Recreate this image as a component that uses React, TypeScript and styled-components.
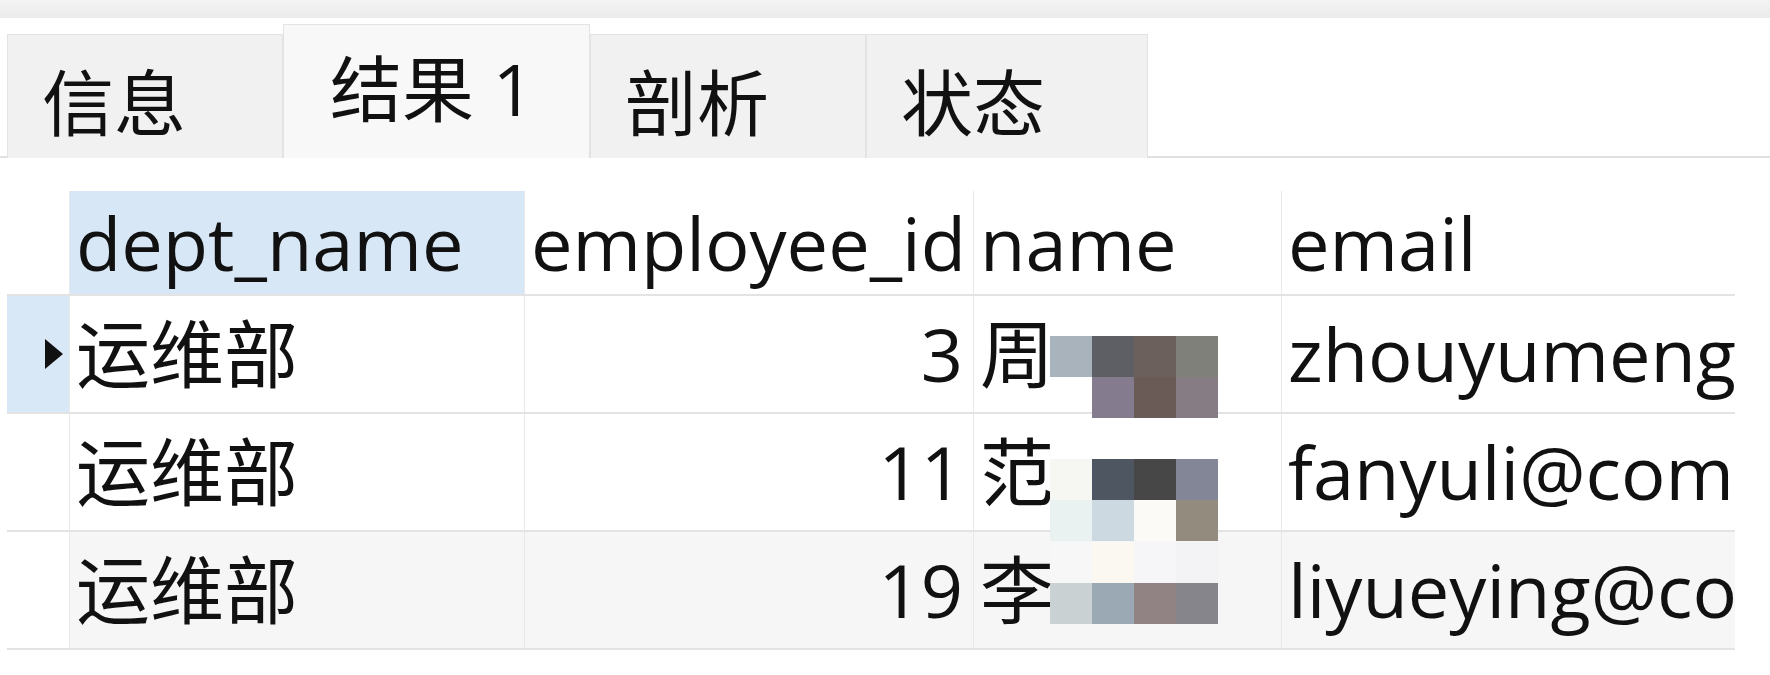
import styled, { createGlobalStyle } from 'styled-components';

const GlobalStyle = createGlobalStyle`
  html, body {
    margin: 0;
    padding: 0;
    background: #ffffff;
  }
  body {
    font-family: "Open Sans", "Noto Sans CJK SC", sans-serif;
    color: #111111;
  }
`;

const GRID = '62px 455px 449px 308px 454px';

const Page = styled.div`
  width: 1770px;
  height: 675px;
  overflow: hidden;
`;

const TopStrip = styled.div`
  height: 18px;
  background: linear-gradient(#f4f4f4, #ebebeb);
`;

const TabBar = styled.div`
  display: flex;
  align-items: flex-end;
  height: 133px;
  margin-top: 5px;
  padding-left: 7px;
  border-bottom: 2px solid #e0e0e0;
`;

const Tab = styled.div<{ $active?: boolean; $width: number }>`
  box-sizing: border-box;
  width: ${p => p.$width}px;
  height: ${p => (p.$active ? 134 : 124)}px;
  margin-bottom: -2px;
  padding-left: ${p => (p.$active ? 46 : 34)}px;
  padding-top: ${p => (p.$active ? 0 : 10)}px;
  padding-bottom: ${p => (p.$active ? 8 : 0)}px;
  display: flex;
  align-items: center;
  background: ${p => (p.$active ? '#f8f8f8' : '#f1f1f1')};
  border: 1px solid #e3e3e3;
  border-bottom: none;
  font-size: 72px;
  line-height: 1;
  white-space: nowrap;
`;

const Table = styled.div`
  width: 1728px;
  margin: 33px 0 0 7px;
`;

const Row = styled.div<{ $header?: boolean; $striped?: boolean }>`
  box-sizing: border-box;
  display: grid;
  grid-template-columns: ${GRID};
  height: ${p => (p.$header ? 105 : 118)}px;
  background: ${p => (p.$striped ? '#f6f6f6' : '#ffffff')};
  border-bottom: 2px solid #e3e3e3;
`;

const Indicator = styled.div<{ $current?: boolean }>`
  display: flex;
  align-items: center;
  justify-content: flex-end;
  padding-right: 6px;
  background: ${p => (p.$current ? '#d9e8f7' : '#ffffff')};
`;

const Cell = styled.div<{ $right?: boolean; $selected?: boolean; $clip?: boolean }>`
  position: relative;
  display: flex;
  align-items: center;
  justify-content: ${p => (p.$right ? 'flex-end' : 'flex-start')};
  padding: ${p => (p.$right ? '0 10px 0 0' : '0 0 0 6px')};
  overflow: ${p => (p.$clip ? 'hidden' : 'visible')};
  white-space: nowrap;
  font-size: 74px;
  line-height: 1;
  background: ${p => (p.$selected ? '#d8e7f6' : 'transparent')};
  border-left: 1px solid #e8e8e8;
`;

const Mosaic = styled.div<{ $top: number }>`
  position: absolute;
  left: 76px;
  top: ${p => p.$top}px;
  z-index: 1;
  display: grid;
  grid-template-columns: repeat(4, 42px);
  grid-auto-rows: 41px;
`;

const Tile = styled.span<{ $color: string }>`
  background: ${p => p.$color};
`;

const tabs = [
  { label: '信息', width: 276 },
  { label: '结果 1', width: 307, active: true },
  { label: '剖析', width: 276 },
  { label: '状态', width: 282 },
];

const rows = [
  {
    dept: '运维部',
    id: 3,
    surname: '周',
    email: 'zhouyumeng@company.com',
    mosaicTop: 40,
    tiles: ['#a9b3bb', '#5e5e65', '#6b605b', '#80807b', 'transparent', '#857b8f', '#6b5b56', '#867d84'],
  },
  {
    dept: '运维部',
    id: 11,
    surname: '范',
    email: 'fanyuli@company.com',
    mosaicTop: 45,
    tiles: ['#f6f7f3', '#4d5661', '#474747', '#828696', '#eaf1f1', '#cdd9e0', '#fbfaf6', '#948b7f'],
  },
  {
    dept: '运维部',
    id: 19,
    surname: '李',
    email: 'liyueying@company.com',
    mosaicTop: 10,
    tiles: ['#f7f7f7', '#fbf8f2', '#f6f6f8', '#f3f3f5', '#cad1d2', '#9ba9b4', '#918383', '#86858b'],
  },
];

function RowArrow() {
  return (
    <svg width="18" height="30" viewBox="0 0 18 30">
      <polygon points="0,0 18,15 0,30" fill="#111" />
    </svg>
  );
}

export default function App() {
  return (
    <Page>
      <GlobalStyle />
      <TopStrip />
      <TabBar>
        {tabs.map(t => (
          <Tab key={t.label} $width={t.width} $active={t.active}>
            {t.label}
          </Tab>
        ))}
      </TabBar>

      <Table>
        <Row $header>
          <Indicator />
          <Cell $selected $clip>dept_name</Cell>
          <Cell $clip>employee_id</Cell>
          <Cell $clip>name</Cell>
          <Cell $clip>email</Cell>
        </Row>
        {rows.map((r, i) => (
          <Row key={r.id} $striped={i === 2}>
            <Indicator $current={i === 0}>{i === 0 && <RowArrow />}</Indicator>
            <Cell $clip>{r.dept}</Cell>
            <Cell $right $clip>{r.id}</Cell>
            <Cell>
              {r.surname}
              <Mosaic $top={r.mosaicTop}>
                {r.tiles.map((c, k) => (
                  <Tile key={k} $color={c} />
                ))}
              </Mosaic>
            </Cell>
            <Cell $clip>{r.email}</Cell>
          </Row>
        ))}
      </Table>
    </Page>
  );
}
